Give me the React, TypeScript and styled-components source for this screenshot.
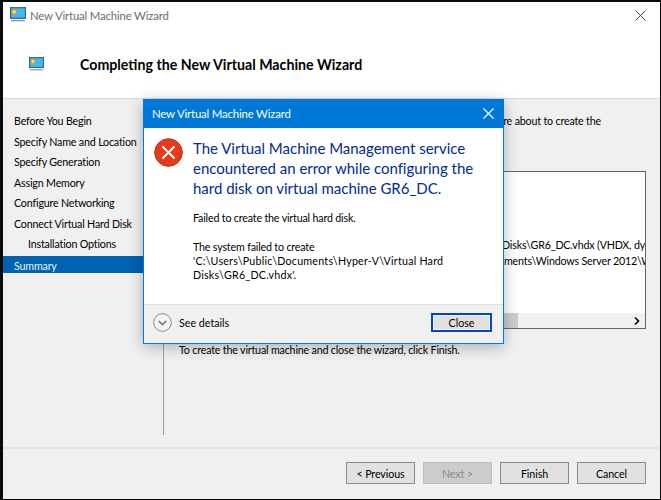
import React from "react";
import styled, { createGlobalStyle } from "styled-components";

const Global = createGlobalStyle`
  html, body { margin: 0; padding: 0; background: #0a0a0a; }
  * { box-sizing: border-box; }
`;

const FONT = `"Lato", "Liberation Sans", sans-serif`;

const Stage = styled.div`
  position: relative;
  width: 661px;
  height: 500px;
  padding: 2px 1px 1px 3px;
  background: #0a0a0a;
  font-family: ${FONT};
  font-size: 10.7px;
  letter-spacing: -0.18px;
  color: #000;
  overflow: hidden;
`;
const Wizard = styled.div`
  width: 100%;
  height: 100%;
  display: flex;
  flex-direction: column;
  background: #f0f0f0;
`;
const TitleBar = styled.div`
  height: 26px;
  flex: none;
  display: flex;
  align-items: center;
  gap: 4px;
  padding: 0 14px 0 7px;
  background: #fff;
  color: #6d6d6d;
  font-size: 11.4px;
`;
const TitleText = styled.span`
  flex: 1;
`;
const Banner = styled.div`
  height: 71px;
  flex: none;
  display: flex;
  align-items: center;
  gap: 36px;
  padding: 2px 0 0 26px;
  background: #fff;
  border-bottom: 1px solid #d8d8d8;
`;
const BannerTitle = styled.h1`
  margin: 0;
  font-size: 14.2px;
  font-weight: 700;
  letter-spacing: 0;
  color: #000;
`;
const Body = styled.div`
  flex: 1;
  min-height: 0;
  display: flex;
  padding-bottom: 12px;
`;
const Steps = styled.ul`
  list-style: none;
  margin: 0;
  padding: 13px 0 0;
  width: 161px;
  flex: none;
  border-right: 1px solid #a0a0a0;
`;
const Step = styled.li<{ $sub?: boolean; $active?: boolean }>`
  height: ${(p) => (p.$active ? 17 : 20.5)}px;
  line-height: ${(p) => (p.$active ? 19 : 18)}px;
  padding-left: ${(p) => (p.$sub ? 25 : 11)}px;
  white-space: nowrap;
  background: ${(p) => (p.$active ? "#0063b1" : "transparent")};
  color: ${(p) => (p.$active ? "#e8f2fa" : "#000")};
`;
const Main = styled.div`
  flex: 1;
  min-width: 0;
  display: flex;
  flex-direction: column;
  padding: 13px 14px 0 15px;
`;
const Intro = styled.p`
  margin: 0;
  height: 59px;
  line-height: 17px;
  white-space: nowrap;
  overflow: hidden;
  padding-left: 319px;
`;
const SummaryBox = styled.div`
  height: 158px;
  flex: none;
  display: flex;
  flex-direction: column;
  background: #fff;
  border: 1px solid #646464;
`;
const SummaryLines = styled.div`
  flex: 1;
  min-height: 0;
  overflow: hidden;
  padding: 65px 0 0 0;
  line-height: 16px;
  white-space: nowrap;
`;
const SummaryLine = styled.div<{ $shift: number }>`
  margin-left: ${(p) => p.$shift}px;
`;
const HScroll = styled.div`
  height: 15px;
  flex: none;
  display: flex;
  align-items: center;
  background: #f0f0f0;
`;
const HThumb = styled.div`
  width: 338px;
  height: 100%;
  background: #cdcdcd;
`;
const HTrack = styled.div`
  flex: 1;
`;
const HArrow = styled.svg`
  width: 16px;
  height: 16px;
  flex: none;
`;
const Outro = styled.p`
  margin: 13px 0 0;
  line-height: 16px;
  white-space: nowrap;
`;
const Footer = styled.div`
  height: 52px;
  flex: none;
  display: flex;
  justify-content: flex-end;
  gap: 8px;
  padding: 13px 14px 0 0;
  border-top: 2px solid #e4e4e4;
`;
const NavButton = styled.button<{ $disabled?: boolean }>`
  width: 69px;
  height: 22px;
  padding: 1px 0 0;
  font-family: ${FONT};
  font-size: 10.7px;
  letter-spacing: -0.1px;
  line-height: 18px;
  color: ${(p) => (p.$disabled ? "#8a8a8a" : "#000")};
  background: ${(p) => (p.$disabled ? "#cccccc" : "#e1e1e1")};
  border: 1px solid ${(p) => (p.$disabled ? "#bfbfbf" : "#8a8a8a")};
`;

const Dialog = styled.div`
  position: absolute;
  left: 143px;
  top: 99px;
  width: 361px;
  height: 245px;
  display: flex;
  flex-direction: column;
  background: #fff;
  border: 1px solid #0078d7;
  box-shadow: 0 3px 14px rgba(0, 0, 0, 0.28);
`;
const DialogBar = styled.div`
  height: 28px;
  flex: none;
  display: flex;
  align-items: center;
  justify-content: space-between;
  padding: 0 9px 1px 8px;
  background: #0078d7;
  color: #fff;
  font-size: 11.4px;
`;
const DialogBody = styled.div`
  flex: 1;
  min-height: 0;
  display: flex;
  gap: 10px;
  padding: 10px 8px 0 10px;
`;
const DialogText = styled.div`
  flex: 1;
  min-width: 0;
`;
const Heading = styled.h2`
  margin: 0;
  font-size: 15px;
  font-weight: 400;
  letter-spacing: -0.02px;
  line-height: 20px;
  color: #002a9a;
`;
const Para = styled.p`
  margin: 0;
  line-height: 14px;
  &:first-of-type {
    margin-top: 13px;
  }
  & + & {
    margin-top: 15px;
  }
`;
const FilePath = styled.span`
  letter-spacing: 0.22px;
`;
const DialogFoot = styled.div`
  height: 39px;
  flex: none;
  display: flex;
  align-items: center;
  justify-content: space-between;
  padding: 0 11px 3px 9px;
  background: #f0f0f0;
  border-top: 1px solid #dfdfdf;
`;
const Details = styled.div`
  display: flex;
  align-items: center;
  gap: 7px;
  letter-spacing: 0;
`;
const CloseButton = styled.button`
  width: 61px;
  height: 19px;
  padding: 0;
  font-family: ${FONT};
  font-size: 10.7px;
  line-height: 15px;
  color: #000;
  background: #e1e1e1;
  border: 2px solid #0047c8;
  box-shadow: inset 0 0 0 1px #f5f5f5;
`;

const VmIcon = ({ size }: { size: number }) => (
  <svg width={size} height={size} viewBox="0 0 16 16" style={{ flex: "none" }}>
    <rect x="0.3" y="0.5" width="15.4" height="11" fill="#1b7fc0" stroke="#0b3f66" strokeWidth="0.6" />
    <rect x="1.2" y="1.4" width="13.6" height="9.2" fill="#43b6ee" />
    <path d="M4.2 0.8L5 3L7.2 2.2L6 4.4L8 5.4L5.8 6L6.4 8.4L4.4 7L2.8 8.8L2.8 6.4L0.6 6.2L2.4 4.6L1 2.6L3.2 3Z" fill="#f29a1e" />
    <circle cx="4.2" cy="4.8" r="1.5" fill="#ffe36a" />
    <rect x="1" y="13" width="14" height="1.3" fill="#8e9aa8" />
  </svg>
);

export default function App() {
  return (
    <Stage>
      <Global />
      <Wizard>
        <TitleBar>
          <VmIcon size={16} />
          <TitleText>New Virtual Machine Wizard</TitleText>
          <svg width="11" height="11" viewBox="0 0 11 11">
            <path d="M0.5 0.5L10.5 10.5M10.5 0.5L0.5 10.5" stroke="#444" strokeWidth="1" fill="none" />
          </svg>
        </TitleBar>
        <Banner>
          <VmIcon size={15} />
          <BannerTitle>Completing the New Virtual Machine Wizard</BannerTitle>
        </Banner>
        <Body>
          <Steps>
            <Step>Before You Begin</Step>
            <Step>Specify Name and Location</Step>
            <Step>Specify Generation</Step>
            <Step>Assign Memory</Step>
            <Step>Configure Networking</Step>
            <Step>Connect Virtual Hard Disk</Step>
            <Step $sub>Installation Options</Step>
            <Step $active>Summary</Step>
          </Steps>
          <Main>
            <Intro>are about to create the</Intro>
            <SummaryBox>
              <SummaryLines>
                <SummaryLine $shift={322}>Disks\GR6_DC.vhdx (VHDX, dynamically expanding)</SummaryLine>
                <SummaryLine $shift={324}>ments\Windows Server 2012\Windows Server 2012.iso</SummaryLine>
              </SummaryLines>
              <HScroll>
                <HThumb />
                <HTrack />
                <HArrow viewBox="0 0 16 16">
                  <path d="M6 4.5L9.5 8L6 11.5" fill="none" stroke="#000" strokeWidth="1.6" />
                </HArrow>
              </HScroll>
            </SummaryBox>
            <Outro>To create the virtual machine and close the wizard, click Finish.</Outro>
          </Main>
        </Body>
        <Footer>
          <NavButton>&lt; Previous</NavButton>
          <NavButton $disabled>Next &gt;</NavButton>
          <NavButton>Finish</NavButton>
          <NavButton>Cancel</NavButton>
        </Footer>
      </Wizard>

      <Dialog>
        <DialogBar>
          <span>New Virtual Machine Wizard</span>
          <svg width="11" height="11" viewBox="0 0 11 11">
            <path d="M0.5 0.5L10.5 10.5M10.5 0.5L0.5 10.5" stroke="#fff" strokeWidth="1.2" fill="none" />
          </svg>
        </DialogBar>
        <DialogBody>
          <svg width="29" height="29" viewBox="0 0 29 29" style={{ flex: "none" }}>
            <circle cx="14.5" cy="14.5" r="13.8" fill="#e63a18" stroke="#a8321c" strokeWidth="1" />
            <path d="M8.5 8.5L20.5 20.5M20.5 8.5L8.5 20.5" stroke="#fff" strokeWidth="2" fill="none" />
          </svg>
          <DialogText>
            <Heading>The Virtual Machine Management service encountered an error while configuring the hard disk on virtual machine GR6_DC.</Heading>
            <Para>Failed to create the virtual hard disk.</Para>
            <Para>
              The system failed to create
              <br />
              <FilePath>
                'C:\Users\Public\Documents\Hyper-V\Virtual Hard
                <br />
                Disks\GR6_DC.vhdx'.
              </FilePath>
            </Para>
          </DialogText>
        </DialogBody>
        <DialogFoot>
          <Details>
            <svg width="19" height="19" viewBox="0 0 19 19">
              <circle cx="9.5" cy="9.5" r="8.8" fill="#f4f4f4" stroke="#8a8a8a" strokeWidth="1" />
              <path d="M5.8 8L9.5 11.7L13.2 8" fill="none" stroke="#555" strokeWidth="1.1" />
            </svg>
            <span>See details</span>
          </Details>
          <CloseButton>Close</CloseButton>
        </DialogFoot>
      </Dialog>
    </Stage>
  );
}
